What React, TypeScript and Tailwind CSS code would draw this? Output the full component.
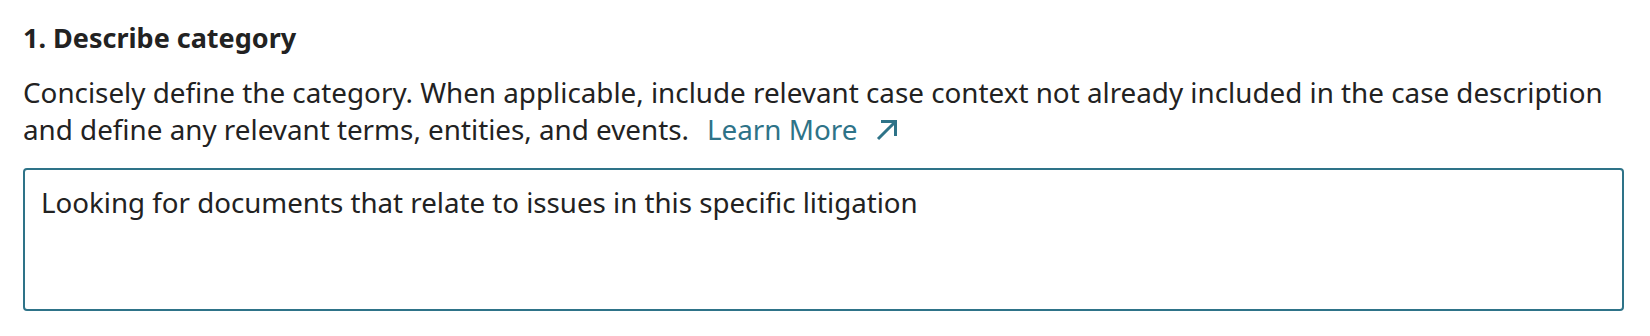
import React from 'react';

const ArrowUpRight: React.FC = () => (
  <svg
    width="20"
    height="20"
    viewBox="0 0 20 20"
    fill="none"
    stroke="currentColor"
    strokeWidth="3"
    className="inline-block overflow-visible"
  >
    <path d="M1 19 L18.3 1.7" />
    <path d="M4 1.5 H18.5 V16" />
  </svg>
);

const App: React.FC = () => {
  return (
    <div className="min-h-screen bg-white pl-[23px] pr-[26px] pt-[20px] font-['Noto_Sans','Open_Sans',sans-serif] text-[#222222]">
      {/* Section header */}
      <h2 className="text-[27px] font-bold leading-[36px]">1. Describe category</h2>

      {/* Help text */}
      <p className="mt-[18px] text-[27.8px] leading-[37px]">
        Concisely define the category. When applicable, include relevant case context not already included in the case description
        and define any relevant terms, entities, and events.
        <a href="#" className="ml-[18px] inline-flex items-center gap-[20px] text-[#2e7388]">
          Learn More
          <ArrowUpRight />
        </a>
      </p>

      {/* Description input */}
      <textarea
        readOnly
        defaultValue="Looking for documents that relate to issues in this specific litigation"
        className="mt-[20px] block h-[143px] w-full resize-none rounded-[4px] border-2 border-[#2e7388] px-[16px] py-[14px] text-[27.7px] leading-[37px] text-[#222222] outline-none"
      />
    </div>
  );
};

export default App;
